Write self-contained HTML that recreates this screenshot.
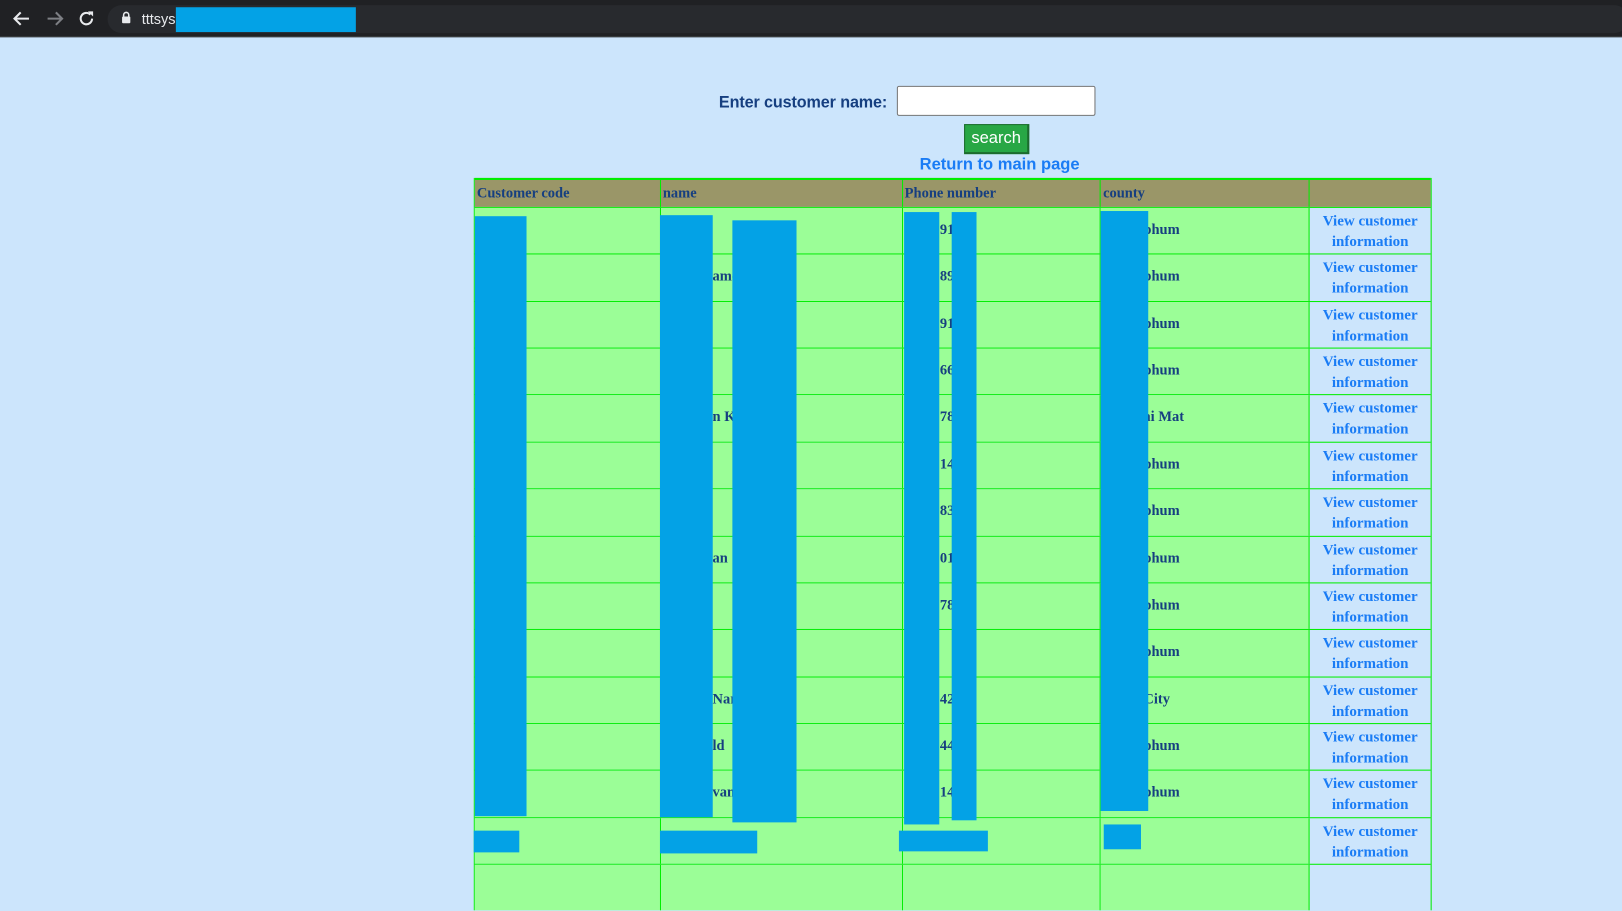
<!DOCTYPE html>
<html><head><meta charset="utf-8"><style>
*{margin:0;padding:0;box-sizing:border-box}
html,body{width:1622px;height:868px;overflow:hidden;background:#cce5fc}
#w{position:absolute;left:0;top:0;width:1568px;height:839px;transform:scale(1.03444);transform-origin:0 0;font-family:"Liberation Sans",sans-serif}
.bar{position:absolute;left:0;top:0;width:1568px;height:36px;background:#202124;border-bottom:1px solid #3c4043}
.url{position:absolute;left:104px;top:5px;width:1470px;height:27px;background:#282a2e;border-radius:14px}
.abs{position:absolute}
.blue{position:absolute;background:#03a2e6}
.lbl{position:absolute;left:695px;top:91px;font-weight:bold;font-size:15.6px;color:#163f80;letter-spacing:-0.1px}
.inp{position:absolute;left:867px;top:83px;width:192px;height:29px;background:#fff;border:1px solid #767676;border-radius:2px}
.btn{position:absolute;left:932px;top:120px;width:63px;height:29px;background:#28a745;border:1px solid #1c6b2e;border-right-width:2px;border-bottom-width:2px;color:#fff;font-size:16px;text-align:center;line-height:26px}
.ret{position:absolute;left:889px;top:151px;font-weight:bold;font-size:16px;color:#1a7cf5}
.tbl{position:absolute;left:458px;top:172px;width:926px;font-family:"Liberation Serif",serif;font-weight:bold;font-size:14px;color:#163f80;border-left:1px solid #00ee00;border-right:1px solid #00ee00}
.row{height:45.36px;border-top:1px solid #00ee00;position:relative;display:flex}
.hd{height:28px;border-top:2px solid #00ee00;background:#9a9668;display:flex}
.c{position:relative;border-right:1px solid #00ee00;height:100%}
.c1{width:180px;background:#9bfe97}.c2{width:234px;background:#9bfe97}.c3{width:192px;background:#9bfe97}.c4{width:202px;background:#9bfe97}.c5{width:117px;border-right:none}
.hd .c{background:none}
.hd .c span{position:absolute;left:2px;top:6px}
.t{position:absolute;top:14px;white-space:nowrap}
.c4 .t{left:41px !important}
.lk{color:#1a7cf5;text-align:center;font-size:14.5px;line-height:20px;padding-top:3px;width:100%}
</style></head><body><div id="w">
<div class="bar">
<svg class="abs" style="left:12px;top:10px" width="18" height="16" viewBox="0 0 18 16"><path d="M16 8H3M8 2L2 8l6 6" stroke="#e8eaed" stroke-width="2" fill="none"/></svg>
<svg class="abs" style="left:44px;top:10px" width="18" height="16" viewBox="0 0 18 16"><path d="M2 8h13M10 2l6 6-6 6" stroke="#7d7f84" stroke-width="2" fill="none"/></svg>
<svg class="abs" style="left:75px;top:9px" width="18" height="18" viewBox="0 0 18 18"><path d="M14 9a5.5 5.5 0 1 1-1.6-3.9" stroke="#e8eaed" stroke-width="2" fill="none"/><path d="M10 2h5v5z" fill="#e8eaed"/></svg>
<div class="url"></div>
<svg class="abs" style="left:117px;top:11px" width="10" height="12" viewBox="0 0 10 12"><path d="M2.5 5V3.5a2.5 2.5 0 0 1 5 0V5" stroke="#e8eaed" stroke-width="1.5" fill="none"/><rect x="1" y="5" width="8" height="6.5" rx="1" fill="#e8eaed"/></svg>
<div class="abs" style="left:137px;top:10px;color:#e8eaed;font-size:14px">tttsys</div>
<div class="blue" style="left:170px;top:7px;width:174px;height:24px"></div>
</div>
<div class="lbl">Enter customer name:</div>
<div class="inp"></div>
<div class="btn">search</div>
<div class="ret">Return to main page</div>
<div class="tbl">
<div class="hd"><div class="c c1"><span>Customer code</span></div><div class="c c2"><span>name</span></div><div class="c c3"><span>Phone number</span></div><div class="c c4"><span>county</span></div><div class="c c5"></div></div>
<div class="row"><div class="c c1"></div><div class="c c2"></div><div class="c c3"><span class="t" style="left:36px">91</span></div><div class="c c4"><span class="t">phum</span></div><div class="c c5"><div class="lk">View customer<br>information</div></div></div>
<div class="row"><div class="c c1"></div><div class="c c2"><span class="t" style="left:50px">ame</span></div><div class="c c3"><span class="t" style="left:36px">89</span></div><div class="c c4"><span class="t">phum</span></div><div class="c c5"><div class="lk">View customer<br>information</div></div></div>
<div class="row"><div class="c c1"></div><div class="c c2"></div><div class="c c3"><span class="t" style="left:36px">91</span></div><div class="c c4"><span class="t">phum</span></div><div class="c c5"><div class="lk">View customer<br>information</div></div></div>
<div class="row"><div class="c c1"></div><div class="c c2"></div><div class="c c3"><span class="t" style="left:36px">66</span></div><div class="c c4"><span class="t">phum</span></div><div class="c c5"><div class="lk">View customer<br>information</div></div></div>
<div class="row"><div class="c c1"></div><div class="c c2"><span class="t" style="left:50px">n K</span></div><div class="c c3"><span class="t" style="left:36px">78</span></div><div class="c c4"><span class="t">ai Mat</span></div><div class="c c5"><div class="lk">View customer<br>information</div></div></div>
<div class="row"><div class="c c1"></div><div class="c c2"></div><div class="c c3"><span class="t" style="left:36px">14</span></div><div class="c c4"><span class="t">phum</span></div><div class="c c5"><div class="lk">View customer<br>information</div></div></div>
<div class="row"><div class="c c1"></div><div class="c c2"></div><div class="c c3"><span class="t" style="left:36px">83</span></div><div class="c c4"><span class="t">phum</span></div><div class="c c5"><div class="lk">View customer<br>information</div></div></div>
<div class="row"><div class="c c1"></div><div class="c c2"><span class="t" style="left:50px">an</span></div><div class="c c3"><span class="t" style="left:36px">01</span></div><div class="c c4"><span class="t">phum</span></div><div class="c c5"><div class="lk">View customer<br>information</div></div></div>
<div class="row"><div class="c c1"></div><div class="c c2"></div><div class="c c3"><span class="t" style="left:36px">78</span></div><div class="c c4"><span class="t">phum</span></div><div class="c c5"><div class="lk">View customer<br>information</div></div></div>
<div class="row"><div class="c c1"></div><div class="c c2"></div><div class="c c3"></div><div class="c c4"><span class="t">phum</span></div><div class="c c5"><div class="lk">View customer<br>information</div></div></div>
<div class="row"><div class="c c1"></div><div class="c c2"><span class="t" style="left:50px">Nar</span></div><div class="c c3"><span class="t" style="left:36px">42</span></div><div class="c c4"><span class="t">City</span></div><div class="c c5"><div class="lk">View customer<br>information</div></div></div>
<div class="row"><div class="c c1"></div><div class="c c2"><span class="t" style="left:50px">ld</span></div><div class="c c3"><span class="t" style="left:36px">44</span></div><div class="c c4"><span class="t">phum</span></div><div class="c c5"><div class="lk">View customer<br>information</div></div></div>
<div class="row"><div class="c c1"></div><div class="c c2"><span class="t" style="left:50px">van</span></div><div class="c c3"><span class="t" style="left:36px">14</span></div><div class="c c4"><span class="t">phum</span></div><div class="c c5"><div class="lk">View customer<br>information</div></div></div>
<div class="row"><div class="c c1"></div><div class="c c2"></div><div class="c c3"></div><div class="c c4"></div><div class="c c5"><div class="lk">View customer<br>information</div></div></div>
<div class="row"><div class="c c1"></div><div class="c c2"></div><div class="c c3"></div><div class="c c4"></div><div class="c c5"></div></div>
</div>
<div class="blue" style="left:459px;top:209px;width:50px;height:580px"></div>
<div class="blue" style="left:638px;top:208px;width:51px;height:582px"></div>
<div class="blue" style="left:708px;top:213px;width:62px;height:582px"></div>
<div class="blue" style="left:874px;top:205px;width:34px;height:592px"></div>
<div class="blue" style="left:920px;top:205px;width:24px;height:588px"></div>
<div class="blue" style="left:1064px;top:204px;width:46px;height:580px"></div>
<div class="blue" style="left:458px;top:803px;width:44px;height:21px"></div>
<div class="blue" style="left:638px;top:803px;width:94px;height:22px"></div>
<div class="blue" style="left:869px;top:803px;width:86px;height:20px"></div>
<div class="blue" style="left:1067px;top:797px;width:36px;height:24px"></div>
</div></body></html>
